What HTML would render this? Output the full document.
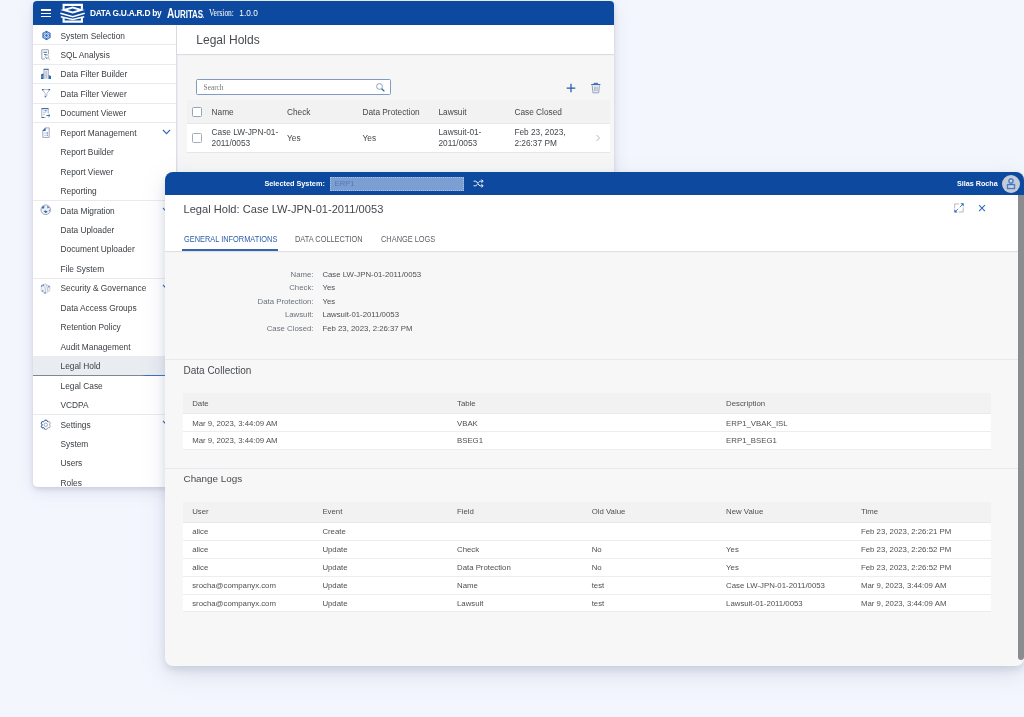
<!DOCTYPE html>
<html>
<head>
<meta charset="utf-8">
<title>Legal Holds</title>
<style>
*{box-sizing:border-box;margin:0;padding:0}
html,body{width:1024px;height:717px;overflow:hidden}
body{background:#f3f6fd;font-family:"Liberation Sans",sans-serif;color:#32363a;position:relative}
.abs{position:absolute}
.gl{will-change:transform}
.t{position:absolute;white-space:nowrap;line-height:1}
/* back window */
#back{position:absolute;left:33px;top:1px;width:581px;height:486px;background:#f6f6f7;border-radius:4px 4px 0 5px;box-shadow:0 2px 4px rgba(105,115,140,.22),0 4px 16px rgba(125,135,170,.18);overflow:hidden}
.nav{position:absolute;font-size:8.35px;color:#3c4045;white-space:nowrap;line-height:10px}
.ln{position:absolute;left:0;width:143px;height:1px;background:#e8eaee}
/* front window */
#front{position:absolute;left:165px;top:172px;width:859px;height:494px;background:#f7f7f7;border-radius:8px 8px 8px 8px;box-shadow:0 4px 7px rgba(105,115,140,.20),0 8px 24px rgba(125,135,170,.20);overflow:hidden}
.th{position:absolute;background:#f2f2f2}
.tr{position:absolute;background:#fff;border-bottom:1px solid #ededed}
.c{position:absolute;white-space:nowrap;font-size:7.8px;line-height:9px;color:#4c5055}
.tb{top:235px;font-size:8.3px;transform-origin:0 0;transform:scaleX(.892)}
.bt{font-size:8.3px;color:#44484d}
</style>
</head>
<body>
<div id="back"><div class="abs gl" style="left:-33px;top:-1px;width:1024px;height:717px">
  <div class="abs" style="left:33px;top:1px;width:581px;height:24px;background:#0d4a9f"></div>
  <!-- sidebar -->
  <div class="abs" id="side" style="left:33px;top:25px;width:143px;height:462px;background:#fff;box-shadow:1px 0 1.5px rgba(120,130,165,.28)"></div>
  <div class="abs" style="left:33px;top:355.95px;width:143px;height:18.6px;background:#e9ecf1"></div>
  <div class="abs" style="left:33px;top:374.55px;width:143px;height:1.1px;background:linear-gradient(90deg,#7f8794 0,#7f8794 76%,#3a6ec0 79%)"></div>
  <div class="ln" style="left:33px;top:44.33px"></div>
  <div class="ln" style="left:33px;top:63.77px"></div>
  <div class="ln" style="left:33px;top:83.22px"></div>
  <div class="ln" style="left:33px;top:102.67px"></div>
  <div class="ln" style="left:33px;top:122.12px"></div>
  <div class="ln" style="left:33px;top:199.92px"></div>
  <div class="ln" style="left:33px;top:277.73px"></div>
  <div class="ln" style="left:33px;top:413.88px"></div>
  <div class="nav" style="left:60.5px;top:30.50px">System Selection</div>
  <div class="nav" style="left:60.5px;top:49.95px">SQL Analysis</div>
  <div class="nav" style="left:60.5px;top:69.40px">Data Filter Builder</div>
  <div class="nav" style="left:60.5px;top:88.85px">Data Filter Viewer</div>
  <div class="nav" style="left:60.5px;top:108.30px">Document Viewer</div>
  <div class="nav" style="left:60.5px;top:127.75px">Report Management</div>
  <div class="nav" style="left:60.5px;top:147.20px">Report Builder</div>
  <div class="nav" style="left:60.5px;top:166.65px">Report Viewer</div>
  <div class="nav" style="left:60.5px;top:186.10px">Reporting</div>
  <div class="nav" style="left:60.5px;top:205.55px">Data Migration</div>
  <div class="nav" style="left:60.5px;top:225.00px">Data Uploader</div>
  <div class="nav" style="left:60.5px;top:244.45px">Document Uploader</div>
  <div class="nav" style="left:60.5px;top:263.90px">File System</div>
  <div class="nav" style="left:60.5px;top:283.35px">Security &amp; Governance</div>
  <div class="nav" style="left:60.5px;top:302.80px">Data Access Groups</div>
  <div class="nav" style="left:60.5px;top:322.25px">Retention Policy</div>
  <div class="nav" style="left:60.5px;top:341.70px">Audit Management</div>
  <div class="nav" style="left:60.5px;top:361.15px">Legal Hold</div>
  <div class="nav" style="left:60.5px;top:380.60px">Legal Case</div>
  <div class="nav" style="left:60.5px;top:400.05px">VCDPA</div>
  <div class="nav" style="left:60.5px;top:419.50px">Settings</div>
  <div class="nav" style="left:60.5px;top:438.95px">System</div>
  <div class="nav" style="left:60.5px;top:458.40px">Users</div>
  <div class="nav" style="left:60.5px;top:477.85px">Roles</div>
  
  <!-- 1 system selection: blue hexagon w/ light orbits -->
  <svg class="abs" style="left:40.5px;top:29.8px" width="11" height="11" viewBox="0 0 11 11"><path d="M5.5 .8L9.6 3.1V7.8L5.5 10.2L1.4 7.8V3.1Z" fill="#2e67bd"/><ellipse cx="5.5" cy="5.5" rx="3.2" ry="1.5" fill="none" stroke="#e6eefa" stroke-width=".85" transform="rotate(45 5.5 5.5)"/><ellipse cx="5.5" cy="5.5" rx="3.2" ry="1.5" fill="none" stroke="#e6eefa" stroke-width=".85" transform="rotate(-45 5.5 5.5)"/><circle cx="5.5" cy="5.5" r=".8" fill="#2e67bd"/></svg>
  <!-- 2 sql analysis -->
  <svg class="abs" style="left:40px;top:48px" width="12" height="13" viewBox="40 48 12 13"><path d="M48.4 54.2V50.6Q48.4 49.8 47.6 49.8H42.6Q41.8 49.8 41.8 50.6V58.2Q41.8 59 42.6 59H45" fill="none" stroke="#9aa4b3" stroke-width="1.05"/><path d="M43.4 52.3H47M44.2 54.5H46.6" stroke="#2e67bd" stroke-width=".95"/><circle cx="46.9" cy="56.6" r="1.7" fill="#fff" stroke="#9aa4b3" stroke-width=".8"/><path d="M48.2 57.9L50 59.7" stroke="#9aa4b3" stroke-width=".9"/><circle cx="46.6" cy="58.1" r=".55" fill="#2e67bd"/></svg>
  <!-- 3 data filter builder: buildings -->
  <svg class="abs" style="left:40px;top:68px" width="12" height="12" viewBox="40 68 12 12"><path d="M44 79V69.4H48.3V79" fill="#f1f3f7" stroke="#9aa4b3" stroke-width=".95"/><path d="M43.6 69.3H48.7" stroke="#2e67bd" stroke-width="1"/><path d="M46.15 71V78.6" stroke="#b4bcc8" stroke-width="1.3"/><path d="M41 79.1V74.4L43.5 73.3V79.1Z" fill="#2e67bd"/><path d="M48.8 79.1V74.9L51 76V79.1Z" fill="#2e67bd"/><path d="M42 75.8V77.6" stroke="#cfdcf0" stroke-width=".6"/></svg>
  <!-- 4 funnel -->
  <svg class="abs" style="left:40px;top:88px" width="12" height="11" viewBox="40 88 12 11"><path d="M42.2 89.6H49.9L46.9 93.4V96L45.2 97.1V93.4Z" fill="none" stroke="#a9b2bf" stroke-width=".85" stroke-linejoin="round"/><path d="M42 89.6H43.6M48.5 89.6H50.1M45.3 96V97.2" stroke="#2e67bd" stroke-width="1.05"/></svg>
  <!-- 5 document viewer -->
  <svg class="abs" style="left:40px;top:107px" width="12" height="12" viewBox="40 107 12 12"><path d="M48.2 113.2V108.7H41.8V117.5H45.6" fill="none" stroke="#9aa4b3" stroke-width=".9"/><path d="M41.5 108.6H48.5" stroke="#2e67bd" stroke-width="1"/><path d="M43 110.8H47M43 112.7H46.4M43 114.6H45" stroke="#aab3c0" stroke-width=".7"/><path d="M45 110.8H46.4" stroke="#2e67bd" stroke-width=".8"/><path d="M41.8 117.5H44" stroke="#2e67bd" stroke-width="1"/><path d="M46.4 115.6H49.8M48.6 114.3L50 115.6L48.6 116.9" fill="none" stroke="#2e67bd" stroke-width=".95"/></svg>
  <!-- 6 report management -->
  <svg class="abs" style="left:41px;top:126px" width="10" height="13" viewBox="41 126 10 13"><path d="M45.4 127.9H49.2V137.4H42.8V130.6Z" fill="none" stroke="#9aa4b3" stroke-width=".95" stroke-linejoin="round"/><path d="M42.3 130.9L45.6 127.5V130.9Z" fill="#2e67bd"/><path d="M44 133H48M44 135.2H46.2" stroke="#aab3c0" stroke-width=".7"/><path d="M46.6 135.2H48M46.8 133H48" stroke="#2e67bd" stroke-width=".85"/></svg>
  <!-- 7 data migration globe -->
  <svg class="abs" style="left:40.4px;top:204.1px" width="11.5" height="11.5" viewBox="0 0 11.5 11.5"><circle cx="5.75" cy="5.75" r="4.8" fill="#eef2f8" stroke="#8f99a8" stroke-width=".85"/><path d="M2.2 2.6L4.6 2.2L4 4.4L2 4.6Z" fill="#2e67bd"/><path d="M7 2L9.3 3.6L7.6 4.4Z" fill="#2e67bd"/><path d="M3.6 7L5.8 6.4L7.6 7.6L5.8 9.2Z" fill="#2e67bd"/><path d="M8.6 6.2L9.8 5.6L9.4 7.6Z" fill="#2e67bd"/></svg>
  <!-- 8 security & governance (faint) -->
  <svg class="abs" style="left:40.4px;top:282.8px" width="11.5" height="11.5" viewBox="0 0 11.5 11.5"><path d="M5.5 .9L9.9 3.2V7.6L5.6 10.6L1.2 8.2V3.2Z" fill="#eef1f6" stroke="#c3c9d3" stroke-width=".8"/><path d="M3.4 2.2Q6 4 5.6 9.6M5.6 1.4Q8.2 3.6 7.8 8.4" fill="none" stroke="#b4bbc7" stroke-width=".8"/><circle cx="3.2" cy="1.9" r=".75" fill="#2e67bd"/><circle cx="1.7" cy="3" r=".7" fill="#2e67bd"/><circle cx="8.9" cy="3.8" r=".7" fill="#2e67bd"/><circle cx="2.8" cy="7.9" r=".7" fill="#2e67bd"/><circle cx="5" cy="9.9" r=".7" fill="#2e67bd"/></svg>
  <!-- 9 settings gear -->
  <svg class="abs" style="left:40.3px;top:418.6px" width="11.6" height="11.6" viewBox="-5.8 -5.8 11.6 11.6"><path id="gr" d="M-1 -4.9L1 -4.9L1.5 -3.9L2.5 -3.4L3.6 -3.7L4.7 -2L4 -1.1L4 0.1L4.7 1L3.7 2.8L2.6 2.5L1.6 3.1L1.3 4.2L-0.8 4.2L-1.2 3.1L-2.2 2.6L-3.3 2.9L-4.4 1.1L-3.7 0.2L-3.7 -1L-4.4 -1.9L-3.4 -3.7L-2.3 -3.4L-1.3 -4Z" transform="translate(-.15,.35)" fill="none" stroke="#8f99a8" stroke-width=".9" stroke-linejoin="round"/><path d="M-1 -4.9L1 -4.9L1.5 -3.9L2.5 -3.4M-1.3 -4L-2.3 -3.4L-3.4 -3.7L-4.4 -1.9L-3.7 -1L-3.7 .2L-4.4 1.1L-3.3 2.9L-2.2 2.6L-1.2 3.1L-.8 4.2" transform="translate(-.15,.35)" fill="none" stroke="#2e67bd" stroke-width="1" stroke-linejoin="round"/><circle cx="0" cy="0" r="1.7" fill="none" stroke="#8f99a8" stroke-width=".8"/></svg>
  <!-- chevrons -->
  <svg class="abs" style="left:162px;top:128.5px" width="9" height="6" viewBox="0 0 9 6"><path d="M1 1L4.5 4.6L8 1" fill="none" stroke="#2e67bd" stroke-width="1.1"/></svg>
  <svg class="abs" style="left:162px;top:206.5px" width="9" height="6" viewBox="0 0 9 6"><path d="M1 1L4.5 4.6L8 1" fill="none" stroke="#2e67bd" stroke-width="1.1"/></svg>
  <svg class="abs" style="left:162px;top:284.3px" width="9" height="6" viewBox="0 0 9 6"><path d="M1 1L4.5 4.6L8 1" fill="none" stroke="#2e67bd" stroke-width="1.1"/></svg>
  <svg class="abs" style="left:162px;top:420.4px" width="9" height="6" viewBox="0 0 9 6"><path d="M1 1L4.5 4.6L8 1" fill="none" stroke="#2e67bd" stroke-width="1.1"/></svg>

  <!-- content -->
  <div class="abs" id="btitle" style="left:177px;top:25px;width:437px;height:29px;background:#fff;box-shadow:0 1px 1px rgba(0,0,0,.10)"></div>
  
  <!-- hamburger -->
  <div class="abs" style="left:40.7px;top:9.4px;width:10.3px;height:1.3px;background:#fff"></div>
  <div class="abs" style="left:40.7px;top:12.7px;width:10.3px;height:1.3px;background:#fff"></div>
  <div class="abs" style="left:40.7px;top:16px;width:10.3px;height:1.3px;background:#fff"></div>
  <!-- logo -->
  <svg class="abs" style="left:58px;top:2px" width="29" height="22" viewBox="58 2 29 22">
    <path d="M63.6 9.6V4.9H81.9V9.6" fill="none" stroke="#fff" stroke-width="2.1"/>
    <path d="M63.6 17.2V21.6H81.9V17.2" fill="none" stroke="#fff" stroke-width="2.1"/>
    <path d="M60.3 9.9L72.7 6.4L84.7 9.9L72.7 13.6Z" fill="#fff"/>
    <path d="M67.6 9.9L72.7 8.5L77.8 9.9L72.7 11.5Z" fill="#0d4a9f"/>
    <path d="M60.3 13.3L72.7 16.7L84.7 13.3" fill="none" stroke="#fff" stroke-width="1.7"/>
    <path d="M60.8 16.7L72.7 19.6L84.2 16.7" fill="none" stroke="#fff" stroke-width="1.5"/>
  </svg>
  <div class="t" style="left:89.9px;top:9.2px;font-size:8.4px;font-weight:700;letter-spacing:-0.27px;color:#fff">DATA G.U.A.R.D by</div>
  <div class="t" id="aur" style="left:166.6px;top:5.3px;color:#fff;font-weight:700;transform-origin:0 0;transform:scaleX(.69);letter-spacing:-0.1px"><span style="font-size:14.8px;line-height:15px">A</span><span style="font-size:11.6px;line-height:15px">URITAS</span><span style="font-size:3px;line-height:15px">&#9679;</span></div>
  <div class="t" style="left:208.6px;top:8.0px;font-family:'Liberation Serif',serif;font-size:9.6px;color:#fff;transform-origin:0 0;transform:scaleX(.78)">Version:</div>
  <div class="t" style="left:239.3px;top:9.4px;font-size:8.3px;color:#fff">1.0.0</div>

  
  <div class="t" style="left:196.3px;top:34px;font-size:12px;color:#464a4f">Legal Holds</div>
  <!-- search -->
  <div class="abs" style="left:196.3px;top:79.4px;width:194.5px;height:16px;background:#fff;border:1px solid #819cc4;border-radius:1.5px"></div>
  <div class="t" style="left:203.6px;top:84.2px;font-family:'Liberation Serif',serif;font-size:7.3px;color:#74777a">Search</div>
  <svg class="abs" style="left:375.2px;top:82.2px" width="11" height="11" viewBox="0 0 11 11"><circle cx="4.5" cy="4.5" r="2.9" fill="none" stroke="#8c9bb2" stroke-width=".95"/><path d="M6.7 6.7L9.4 9.4" stroke="#2a5fb3" stroke-width="1.25"/></svg>
  <!-- plus / trash -->
  <svg class="abs" style="left:565px;top:82px" width="12" height="12" viewBox="0 0 12 12"><path d="M6 1.7V10.3M1.7 6H10.3" stroke="#2459ad" stroke-width="1.25"/></svg>
  <svg class="abs" style="left:589.5px;top:81.5px" width="12" height="12" viewBox="0 0 12 12"><path d="M1.2 2.6H10.4M4 2.4V1.3H7.6V2.4" fill="none" stroke="#2e62b3" stroke-width="1"/><path d="M2.2 3.4L2.9 10.8H8.7L9.4 3.4" fill="none" stroke="#7f93b3" stroke-width=".85"/><path d="M4.4 4.6V9.3M5.8 4.6V9.3M7.2 4.6V9.3" stroke="#8a9ab5" stroke-width=".7"/></svg>
  <!-- table -->
  <div class="abs" style="left:186.5px;top:100px;width:423.3px;height:24px;background:#f2f2f2;border-bottom:1px solid #e8e8e8"></div>
  <div class="abs" style="left:186.5px;top:124px;width:423.3px;height:28.6px;background:#fff;border-bottom:1px solid #e6e6e6"></div>
  <div class="abs" style="left:191.5px;top:106.8px;width:10.2px;height:9.8px;background:#fff;border:1px solid #98a3b4;border-radius:1.5px"></div>
  <div class="abs" style="left:192px;top:133.2px;width:9.6px;height:9.6px;background:#fff;border:1px solid #a3acba;border-radius:1.5px"></div>
  <div class="t bt" style="left:211.6px;top:107.6px">Name</div>
  <div class="t bt" style="left:287px;top:107.6px">Check</div>
  <div class="t bt" style="left:362.5px;top:107.6px">Data Protection</div>
  <div class="t bt" style="left:438.5px;top:107.6px">Lawsuit</div>
  <div class="t bt" style="left:514.4px;top:107.6px">Case Closed</div>
  <div class="t bt" style="left:211.6px;top:126.7px;line-height:11.3px">Case LW-JPN-01-<br>2011/0053</div>
  <div class="t bt" style="left:287px;top:134px">Yes</div>
  <div class="t bt" style="left:362.5px;top:134px">Yes</div>
  <div class="t bt" style="left:438.5px;top:126.7px;line-height:11.3px">Lawsuit-01-<br>2011/0053</div>
  <div class="t bt" style="left:514.4px;top:126.7px;line-height:11.3px">Feb 23, 2023,<br>2:26:37 PM</div>
  <svg class="abs" style="left:595px;top:133.5px" width="6" height="8" viewBox="0 0 6 8"><path d="M1.5 1L4.5 4L1.5 7" fill="none" stroke="#a9adb2" stroke-width=".9"/></svg>

</div></div>
<div id="front"><div class="abs gl" style="left:-165px;top:-172px;width:1024px;height:717px">
  <div class="abs" style="left:165px;top:172px;width:859px;height:23px;background:#0d4a9f"></div>
  <div class="abs" style="left:165px;top:195px;width:859px;height:55.5px;background:#fff;box-shadow:0 1px 1px rgba(0,0,0,.09)"></div>
  
  <div class="t" style="left:264.4px;top:179.7px;font-size:7.3px;font-weight:700;color:#fff">Selected System:</div>
  <div class="abs" style="left:329.5px;top:176.5px;width:134.5px;height:14px;background:#7b9fd2;border:1px dotted #a9c0e2"></div>
  <div class="t" style="left:334.5px;top:180px;font-size:7.7px;color:#5379b3">ERP1</div>
  <svg class="abs" style="left:473px;top:179px" width="11" height="9" viewBox="0 0 11 9"><path d="M.6 2.2H2.6C4.6 2.2 5.2 6.8 7.2 6.8H9.4M.6 6.8H2.6C3.4 6.8 3.9 6 4.3 5.2M5.5 3.8C5.9 3 6.4 2.2 7.2 2.2H9.4" fill="none" stroke="#fff" stroke-width=".95"/><path d="M8.4 .7L10.2 2.2L8.4 3.7M8.4 5.3L10.2 6.8L8.4 8.3" fill="none" stroke="#fff" stroke-width=".95"/></svg>
  <div class="t" style="left:957px;top:179.8px;font-size:7.2px;font-weight:700;color:#fff">Silas Rocha</div>
  <div class="abs" style="left:1001.8px;top:174.6px;width:18.3px;height:18.3px;border-radius:50%;background:#c5ccd6"></div>
  <svg class="abs" style="left:1005px;top:177px" width="12" height="13" viewBox="1005 177 12 13"><circle cx="1011" cy="181" r="2.1" fill="#c9d6ea" stroke="#4a7fc8" stroke-width="1.4"/><path d="M1011 177.9V179.4" stroke="#4a7fc8" stroke-width="1.2"/><rect x="1007.5" y="184.6" width="7" height="3.9" fill="#cfd8e6" stroke="#4a7fc8" stroke-width="1.4"/><path d="M1009.3 184.2H1012.7" stroke="#3f6fb5" stroke-width="1"/></svg>
  <!-- title row -->
  <div class="t" style="left:183.5px;top:203.6px;font-size:11.1px;color:#43474c">Legal Hold: Case LW-JPN-01-2011/0053</div>
  <svg class="abs" style="left:954.2px;top:203.4px" width="10" height="10" viewBox="0 0 10 10"><path d="M.7 5.4V.9H5.2M9.2 4.4V9H4.8" fill="none" stroke="#a9b2c0" stroke-width=".9"/><path d="M6.4 .3H9.7V3.6ZM.3 6.2V9.5H3.6Z" fill="#2e67bd"/><path d="M5.8 4.2L8 2M4.2 5.8L2 8" stroke="#2e67bd" stroke-width=".8"/></svg>
  <svg class="abs" style="left:977.5px;top:204.3px" width="8" height="8" viewBox="0 0 8 8"><path d="M1.1 1.1L6.9 7.1M6.9 1.1L1.1 7.1" stroke="#2e67bd" stroke-width="1.05"/></svg>
  <!-- tabs -->
  <div class="t tb" style="left:183.5px;color:#2a5caa">GENERAL INFORMATIONS</div>
  <div class="t tb" style="left:295px;color:#5b6068">DATA COLLECTION</div>
  <div class="t tb" style="left:381.3px;color:#5b6068">CHANGE LOGS</div>
  <div class="abs" style="left:182px;top:249px;width:96.4px;height:1.7px;background:#3565b0"></div>

  <div class="c" style="right:710.5px;top:270px;color:#6b727b">Name:</div>
  <div class="c" style="left:322.4px;top:270px">Case LW-JPN-01-2011/0053</div>
  <div class="c" style="right:710.5px;top:283px;color:#6b727b">Check:</div>
  <div class="c" style="left:322.4px;top:283px">Yes</div>
  <div class="c" style="right:710.5px;top:297px;color:#6b727b">Data Protection:</div>
  <div class="c" style="left:322.4px;top:297px">Yes</div>
  <div class="c" style="right:710.5px;top:310px;color:#6b727b">Lawsuit:</div>
  <div class="c" style="left:322.4px;top:310px">Lawsuit-01-2011/0053</div>
  <div class="c" style="right:710.5px;top:324px;color:#6b727b">Case Closed:</div>
  <div class="c" style="left:322.4px;top:324px">Feb 23, 2023, 2:26:37 PM</div>
  <div class="abs" style="left:165px;top:359px;width:853px;height:1px;background:#e8e9ee"></div>
  <div class="abs" style="left:165px;top:468.2px;width:853px;height:1px;background:#e8e9ee"></div>
  <div class="t" style="left:183.5px;top:365.6px;font-size:10px;color:#474b50">Data Collection</div>
  <div class="t" style="left:183.5px;top:473.8px;font-size:9.9px;color:#474b50">Change Logs</div>
  <div class="th" style="left:183px;top:393px;width:808px;height:21.3px;border-bottom:1px solid #e9e9e9"></div>
  <div class="tr" style="left:183px;top:414.3px;width:808px;height:18px"></div>
  <div class="tr" style="left:183px;top:432.3px;width:808px;height:18px"></div>
  <div class="c" style="left:192.2px;top:398.8px">Date</div>
  <div class="c" style="left:457px;top:398.8px">Table</div>
  <div class="c" style="left:726.1px;top:398.8px">Description</div>
  <div class="c" style="left:192.2px;top:418.6px">Mar 9, 2023, 3:44:09 AM</div>
  <div class="c" style="left:457px;top:418.6px">VBAK</div>
  <div class="c" style="left:726.1px;top:418.6px">ERP1_VBAK_ISL</div>
  <div class="c" style="left:192.2px;top:436.4px">Mar 9, 2023, 3:44:09 AM</div>
  <div class="c" style="left:457px;top:436.4px">BSEG1</div>
  <div class="c" style="left:726.1px;top:436.4px">ERP1_BSEG1</div>
  <div class="th" style="left:183px;top:502px;width:808px;height:21px;border-bottom:1px solid #e9e9e9"></div>
  <div class="c" style="left:192.2px;top:507px">User</div>
  <div class="c" style="left:322.4px;top:507px">Event</div>
  <div class="c" style="left:457px;top:507px">Field</div>
  <div class="c" style="left:591.7px;top:507px">Old Value</div>
  <div class="c" style="left:726.1px;top:507px">New Value</div>
  <div class="c" style="left:861px;top:507px">Time</div>
  <div class="tr" style="left:183px;top:523.0px;width:808px;height:17.9px"></div>
  <div class="c" style="left:192.2px;top:527.2px">alice</div>
  <div class="c" style="left:322.4px;top:527.2px">Create</div>
  <div class="c" style="left:861px;top:527.2px">Feb 23, 2023, 2:26:21 PM</div>
  <div class="tr" style="left:183px;top:540.9px;width:808px;height:17.9px"></div>
  <div class="c" style="left:192.2px;top:545.1px">alice</div>
  <div class="c" style="left:322.4px;top:545.1px">Update</div>
  <div class="c" style="left:457px;top:545.1px">Check</div>
  <div class="c" style="left:591.7px;top:545.1px">No</div>
  <div class="c" style="left:726.1px;top:545.1px">Yes</div>
  <div class="c" style="left:861px;top:545.1px">Feb 23, 2023, 2:26:52 PM</div>
  <div class="tr" style="left:183px;top:558.8px;width:808px;height:17.9px"></div>
  <div class="c" style="left:192.2px;top:563.0px">alice</div>
  <div class="c" style="left:322.4px;top:563.0px">Update</div>
  <div class="c" style="left:457px;top:563.0px">Data Protection</div>
  <div class="c" style="left:591.7px;top:563.0px">No</div>
  <div class="c" style="left:726.1px;top:563.0px">Yes</div>
  <div class="c" style="left:861px;top:563.0px">Feb 23, 2023, 2:26:52 PM</div>
  <div class="tr" style="left:183px;top:576.7px;width:808px;height:17.9px"></div>
  <div class="c" style="left:192.2px;top:580.9px">srocha@companyx.com</div>
  <div class="c" style="left:322.4px;top:580.9px">Update</div>
  <div class="c" style="left:457px;top:580.9px">Name</div>
  <div class="c" style="left:591.7px;top:580.9px">test</div>
  <div class="c" style="left:726.1px;top:580.9px">Case LW-JPN-01-2011/0053</div>
  <div class="c" style="left:861px;top:580.9px">Mar 9, 2023, 3:44:09 AM</div>
  <div class="tr" style="left:183px;top:594.6px;width:808px;height:17.9px"></div>
  <div class="c" style="left:192.2px;top:598.8px">srocha@companyx.com</div>
  <div class="c" style="left:322.4px;top:598.8px">Update</div>
  <div class="c" style="left:457px;top:598.8px">Lawsuit</div>
  <div class="c" style="left:591.7px;top:598.8px">test</div>
  <div class="c" style="left:726.1px;top:598.8px">Lawsuit-01-2011/0053</div>
  <div class="c" style="left:861px;top:598.8px">Mar 9, 2023, 3:44:09 AM</div>
  <div class="abs" style="left:1018px;top:195px;width:6px;height:465px;background:#8b8c8f;border-radius:0 0 3px 3px"></div>
</div></div>
</body>
</html>
